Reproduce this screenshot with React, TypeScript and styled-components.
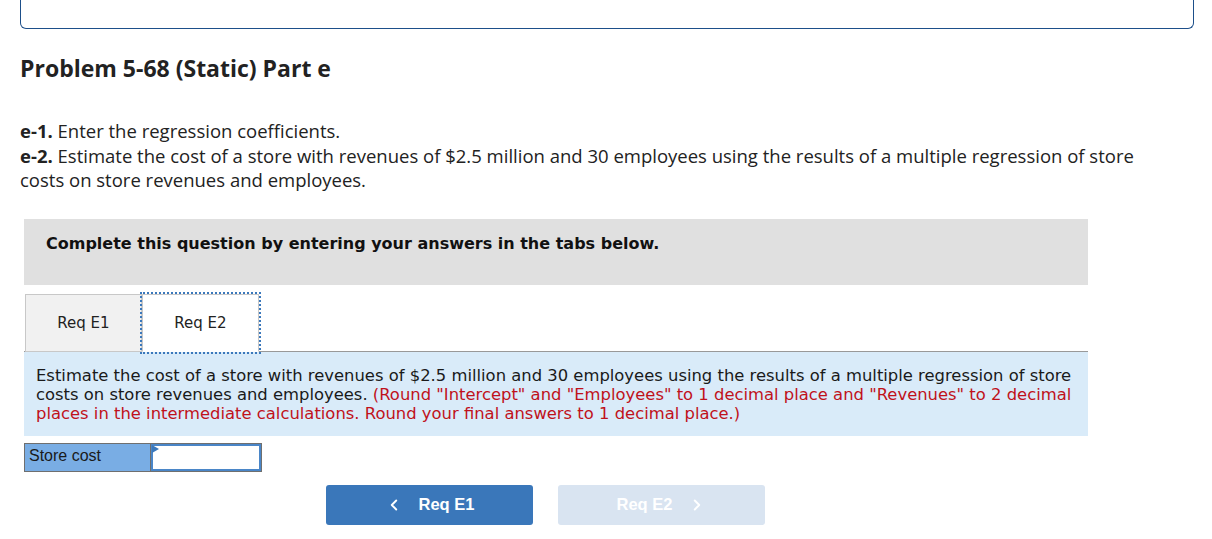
import styled, { createGlobalStyle } from "styled-components";
import { ChevronLeft, ChevronRight } from "lucide-react";

const GlobalStyle = createGlobalStyle`
  body {
    margin: 0;
    background: #fff;
    font-family: "Open Sans", "Liberation Sans", sans-serif;
    color: #222;
  }
`;

const Page = styled.div`
  padding: 0 18px 0 20px;
`;

const TopBox = styled.div`
  height: 28px;
  border: 1px solid #1d4f8a;
  border-top: none;
  border-radius: 0 0 6px 6px;
`;

const Title = styled.h2`
  margin: 25px 0 0;
  font-family: "Open Sans", sans-serif;
  font-weight: 700;
  font-size: 23px;
  line-height: 28px;
  color: #222;
`;

const Intro = styled.div`
  margin-top: 37px;
  font-family: "Open Sans", sans-serif;
  font-size: 18.5px;
  line-height: 24.5px;
  color: #222;
  max-width: 1150px;
`;

const Line = styled.p`
  margin: 0;
  b {
    font-weight: 700;
  }
`;

const Card = styled.div`
  margin: 26px 0 0 4px;
  width: 1064px;
`;

const Notice = styled.div`
  height: 66px;
  background: #e0e0e0;
  padding: 15px 0 0 22px;
  box-sizing: border-box;
  font-family: "DejaVu Sans", Verdana, sans-serif;
  font-weight: 700;
  font-size: 16px;
  color: #111;
`;

const TabBar = styled.div`
  display: flex;
  align-items: flex-end;
  margin-top: 9px;
  border-bottom: 1px solid #999;
`;

const Tab = styled.button<{ $active?: boolean }>`
  width: 117px;
  height: 58px;
  margin-bottom: -1px;
  margin-left: ${(p) => (p.$active ? "0" : "1px")};
  box-sizing: border-box;
  border: 1px solid #c8c8c8;
  border-bottom: ${(p) => (p.$active ? "1px solid #fff" : "1px solid #c8c8c8")};
  background: ${(p) => (p.$active ? "#fff" : "#f1f1f1")};
  outline: ${(p) => (p.$active ? "2px dotted #3b78bb" : "none")};
  outline-offset: 0;
  font-family: "DejaVu Sans", Verdana, sans-serif;
  font-size: 15px;
  color: #222;
  padding: 0;
  cursor: pointer;
`;

const Panel = styled.div`
  background: #d9ebf9;
  padding: 14px 12px 13px 12px;
  font-family: "DejaVu Sans", Verdana, sans-serif;
  font-size: 16.4px;
  line-height: 19px;
  color: #1a1a1a;
`;

const Hint = styled.span`
  color: #c0121b;
`;

const AnswerRow = styled.div`
  display: flex;
  margin-top: 7px;
  height: 29px;
`;

const Label = styled.div`
  width: 126px;
  box-sizing: border-box;
  background: #79ade4;
  border: 1px solid #6f6f6f;
  border-right: none;
  padding: 3px 0 0 4px;
  font-family: "Liberation Sans", Arial, sans-serif;
  font-size: 16px;
  color: #1a1a1a;
`;

const InputCell = styled.div`
  position: relative;
  width: 112px;
  box-sizing: border-box;
  border: 1px solid #6f6f6f;
  background: #fff;
`;

const Input = styled.input`
  width: 100%;
  height: 100%;
  box-sizing: border-box;
  border: 2px solid #4a86c8;
  outline: none;
  font-size: 15px;
  padding: 0 4px;
`;

const Marker = styled.span`
  position: absolute;
  left: 1px;
  top: 1px;
  width: 0;
  height: 0;
  border-top: 4px solid transparent;
  border-bottom: 4px solid transparent;
  border-left: 7px solid #3b78bb;
`;

const Nav = styled.div`
  display: flex;
  gap: 25px;
  margin: 13px 0 0 302px;
`;

const NavButton = styled.button<{ $disabled?: boolean }>`
  width: 207px;
  height: 40px;
  border: none;
  border-radius: 3px;
  background: ${(p) => (p.$disabled ? "#d9e4f1" : "#3a77ba")};
  color: #fff;
  display: flex;
  align-items: center;
  justify-content: center;
  gap: 16px;
  font-family: "Liberation Sans", Arial, sans-serif;
  font-weight: 700;
  font-size: 16.5px;
  cursor: ${(p) => (p.$disabled ? "default" : "pointer")};
`;

export default function App() {
  return (
    <>
      <GlobalStyle />
      <Page>
        <TopBox />
        <Title>Problem 5-68 (Static) Part e</Title>
        <Intro>
          <Line>
            <b>e-1.</b> Enter the regression coefficients.
          </Line>
          <Line>
            <b>e-2.</b> Estimate the cost of a store with revenues of $2.5 million and 30 employees using the
            results of a multiple regression of store costs on store revenues and employees.
          </Line>
        </Intro>
        <Card>
          <Notice>Complete this question by entering your answers in the tabs below.</Notice>
          <TabBar>
            <Tab>Req E1</Tab>
            <Tab $active>Req E2</Tab>
          </TabBar>
          <Panel>
            Estimate the cost of a store with revenues of $2.5 million and 30 employees using the results of a
            multiple regression of store costs on store revenues and employees.{" "}
            <Hint>
              (Round "Intercept" and "Employees" to 1 decimal place and "Revenues" to 2 decimal places in the
              intermediate calculations. Round your final answers to 1 decimal place.)
            </Hint>
          </Panel>
          <AnswerRow>
            <Label>Store cost</Label>
            <InputCell>
              <Input aria-label="Store cost" />
              <Marker />
            </InputCell>
          </AnswerRow>
          <Nav>
            <NavButton>
              <ChevronLeft size={18} strokeWidth={2.5} />
              Req E1
            </NavButton>
            <NavButton $disabled>
              Req E2
              <ChevronRight size={18} strokeWidth={2.5} />
            </NavButton>
          </Nav>
        </Card>
      </Page>
    </>
  );
}
